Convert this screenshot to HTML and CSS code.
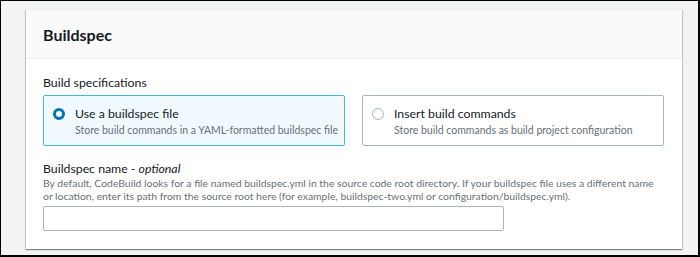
FILE: index.html
```html
<!DOCTYPE html>
<html lang="en">
<head>
<meta charset="UTF-8">
<title>Buildspec</title>
<link rel="stylesheet" href="styles.css">
</head>
<body>
  <div class="frame">
    <!-- Buildspec panel -->
    <div class="panel">
      <div class="panel-header">
        <h2>Buildspec</h2>
      </div>
      <div class="panel-body">
        <div class="field">
          <div class="label">Build specifications</div>
          <div class="tiles">
            <label class="tile selected">
              <span class="radio checked"></span>
              <span class="tile-text">
                <span class="tile-title">Use a buildspec file</span>
                <span class="tile-desc">Store build commands in a YAML-formatted buildspec file</span>
              </span>
            </label>
            <label class="tile">
              <span class="radio"></span>
              <span class="tile-text">
                <span class="tile-title">Insert build commands</span>
                <span class="tile-desc">Store build commands as build project configuration</span>
              </span>
            </label>
          </div>
        </div>
        <div class="field">
          <div class="label">Buildspec name - <em>optional</em></div>
          <p class="hint">By default, CodeBuild looks for a file named buildspec.yml in the source code root directory. If your buildspec file uses a different name or location, enter its path from the source root here (for example, buildspec-two.yml or configuration/buildspec.yml).</p>
          <input type="text" class="text-input">
        </div>
      </div>
    </div>
  </div>
</body>
</html>
```

FILE: styles.css
```css
/* Root Variables */
:root {
  --page-bg: #f2f3f3;
  --header-bg: #fafafa;
  --line: #eaeded;
  --text: #16191f;
  --muted: #687078;
  --blue: #0073bb;
  --tile-blue: #44b9d6;
  --tile-bg: #f1faff;
  --grey-border: #aab7b8;
}

* { box-sizing: border-box; margin: 0; padding: 0; }
html, body { width: 700px; height: 257px; overflow: hidden; }
body {
  font-family: 'Lato', 'Liberation Sans', sans-serif;
  color: var(--text);
}

/* Outer frame */
.frame {
  width: 700px;
  height: 257px;
  background: var(--page-bg);
  border-style: solid;
  border-color: #000;
  border-width: 1px 2px 2px 1px;
  padding: 8px 16px 0 25px;
}

/* Panel */
.panel {
  width: 656px;
  height: 240px;
  background: #fff;
  border-top: 1px solid var(--line);
  box-shadow: 0 1px 1px 0 rgba(0, 28, 36, 0.3), 1px 1px 1px 0 rgba(0, 28, 36, 0.15), -1px 1px 1px 0 rgba(0, 28, 36, 0.15);
}
.panel-header {
  height: 49px;
  background: var(--header-bg);
  border-bottom: 1px solid var(--line);
  padding: 14px 17px 0;
}
.panel-header h2 {
  font-size: 16px;
  font-weight: 700;
  line-height: 22px;
}
.panel-body {
  padding: 15px 17px 0;
  display: flex;
  flex-direction: column;
  gap: 15px;
}

/* Fields */
.label {
  font-size: 12.3px;
  line-height: 18px;
  margin-bottom: 3px;
}
.field + .field .label { line-height: 16px; margin-bottom: 0; }
.label em { font-style: italic; }
.hint {
  font-size: 10.4px;
  line-height: 13px;
  color: var(--muted);
  margin-bottom: 3px;
}
.text-input {
  display: block;
  width: 461px;
  height: 25px;
  border: 1px solid var(--grey-border);
  border-radius: 2px;
  background: #fff;
}

/* Radio tiles */
.tiles {
  display: flex;
  gap: 17px;
}
.tile {
  width: 302px;
  height: 51px;
  display: flex;
  align-items: flex-start;
  gap: 10px;
  padding: 9px 9px 0;
  border: 1px solid var(--grey-border);
  border-radius: 2px;
  cursor: pointer;
  white-space: nowrap;
}
.tile.selected {
  border-color: var(--tile-blue);
  background: var(--tile-bg);
}
.radio {
  flex: none;
  width: 12px;
  height: 12px;
  margin-top: 3px;
  border-radius: 50%;
  border: 1px solid var(--grey-border);
  background: #fff;
}
.radio.checked {
  border: 3.5px solid var(--blue);
}
.tile-text { display: flex; flex-direction: column; }
.tile-title {
  font-size: 12.3px;
  line-height: 18px;
}
.tile-desc {
  font-size: 10.5px;
  line-height: 14px;
  color: var(--muted);
}
```
